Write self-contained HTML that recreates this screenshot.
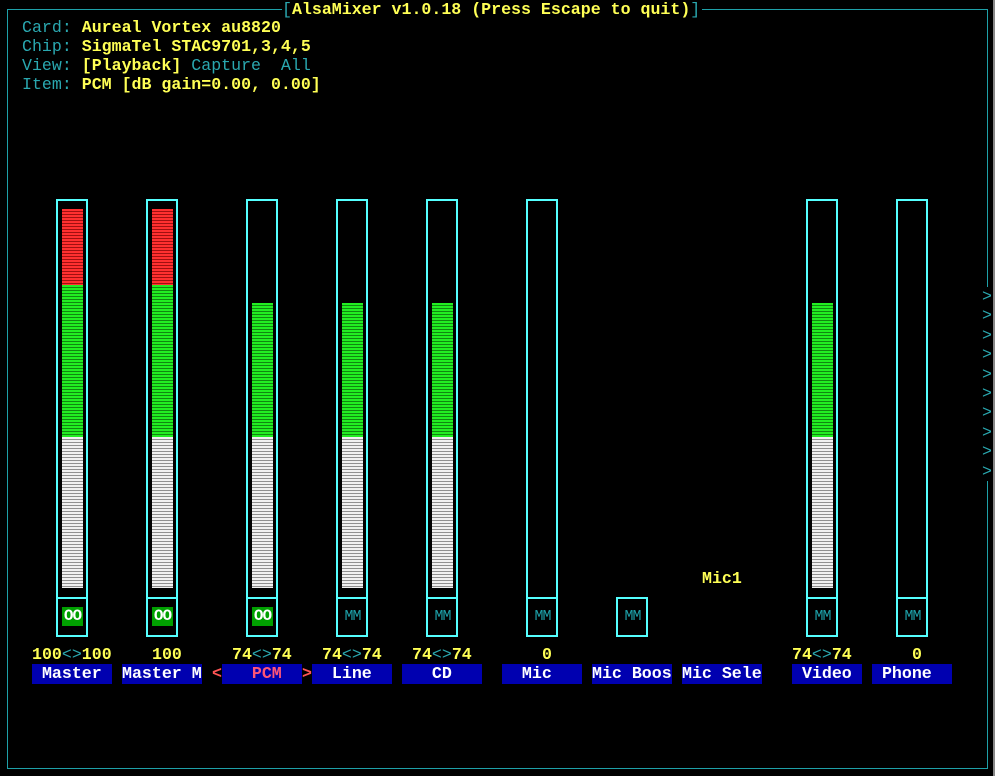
<!DOCTYPE html>
<html><head><style>
html,body{margin:0;padding:0;background:#000;width:995px;height:776px;overflow:hidden;position:relative;font-family:"Liberation Mono",monospace;font-size:16.6px;}
.t{position:absolute;line-height:19px;white-space:pre;}
.c{color:#2aa8b0;}
.y{color:#ffff55;font-weight:bold;}
.bd{position:absolute;background:#1ea0a8;}
.box{position:absolute;border:2px solid #55ffff;box-sizing:border-box;width:32px;}
.sep{position:absolute;height:2px;background:#55ffff;width:32px;}
.f{position:absolute;width:21px;}
.red{background:repeating-linear-gradient(#ff3030 0 2px,#a01010 2px 3px);}
.grn{background:repeating-linear-gradient(#22ee22 0 2px,#108810 2px 3px);}
.wht{background:repeating-linear-gradient(#f0f0f0 0 2px,#909090 2px 3px);}
.lab{position:absolute;top:664px;height:20px;width:80px;background:#0000b0;color:#fff;font-weight:bold;line-height:20px;white-space:pre;}
.mm{position:absolute;color:#1ea0a8;font-size:15px;top:607px;width:21px;text-align:center;line-height:19px;letter-spacing:-1px;}
.oo{position:absolute;background:#00a000;color:#fff;font-weight:bold;top:607px;width:21px;height:19px;text-align:center;line-height:19px;font-size:16px;letter-spacing:-1px;}
</style></head><body>
<div class="bd" style="left:7px;top:9px;width:275px;height:1px"></div>
<div class="bd" style="left:702px;top:9px;width:286px;height:1px"></div>
<div class="bd" style="left:7px;top:9px;width:1px;height:760px"></div>
<div class="bd" style="left:987px;top:9px;width:1px;height:760px"></div>
<div class="bd" style="left:7px;top:768px;width:981px;height:1px"></div>
<div style="position:absolute;left:993px;top:0;width:2px;height:776px;background:#888"></div>
<div class="t" style="left:282px;top:0"><span class="c">[</span><span class="y">AlsaMixer v1.0.18 (Press Escape to quit)</span><span class="c">]</span></div>
<div class="t" style="left:22px;top:18px"><span class="c">Card: </span><span class="y">Aureal Vortex au8820</span></div>
<div class="t" style="left:22px;top:37px"><span class="c">Chip: </span><span class="y">SigmaTel STAC9701,3,4,5</span></div>
<div class="t" style="left:22px;top:56px"><span class="c">View: </span><span class="y">[Playback]</span><span class="c"> Capture  All</span></div>
<div class="t" style="left:22px;top:75px"><span class="c">Item: </span><span class="y">PCM [dB gain=0.00, 0.00]</span></div>
<div class="t c" style="left:982px;top:287px;line-height:19.4px;background:#000">&gt;
&gt;
&gt;
&gt;
&gt;
&gt;
&gt;
&gt;
&gt;
&gt;</div>

<div class="box" style="left:56px;top:199px;height:438px"></div><div class="sep" style="left:56px;top:597px"></div>
<div class="f red" style="left:62px;top:209px;height:76px"></div><div class="f grn" style="left:62px;top:285px;height:152px"></div><div class="f wht" style="left:62px;top:437px;height:151px"></div>
<div class="oo" style="left:62px">OO</div>

<div class="box" style="left:146px;top:199px;height:438px"></div><div class="sep" style="left:146px;top:597px"></div>
<div class="f red" style="left:152px;top:209px;height:76px"></div><div class="f grn" style="left:152px;top:285px;height:152px"></div><div class="f wht" style="left:152px;top:437px;height:151px"></div>
<div class="oo" style="left:152px">OO</div>

<div class="box" style="left:246px;top:199px;height:438px"></div><div class="sep" style="left:246px;top:597px"></div>
<div class="f grn" style="left:252px;top:303px;height:134px"></div><div class="f wht" style="left:252px;top:437px;height:151px"></div>
<div class="oo" style="left:252px">OO</div>

<div class="box" style="left:336px;top:199px;height:438px"></div><div class="sep" style="left:336px;top:597px"></div>
<div class="f grn" style="left:342px;top:303px;height:134px"></div><div class="f wht" style="left:342px;top:437px;height:151px"></div>
<div class="mm" style="left:342px">MM</div>

<div class="box" style="left:426px;top:199px;height:438px"></div><div class="sep" style="left:426px;top:597px"></div>
<div class="f grn" style="left:432px;top:303px;height:134px"></div><div class="f wht" style="left:432px;top:437px;height:151px"></div>
<div class="mm" style="left:432px">MM</div>

<div class="box" style="left:526px;top:199px;height:438px"></div><div class="sep" style="left:526px;top:597px"></div>
<div class="mm" style="left:532px">MM</div>

<div class="box" style="left:616px;top:597px;height:40px"></div>
<div class="mm" style="left:622px">MM</div>

<div class="box" style="left:806px;top:199px;height:438px"></div><div class="sep" style="left:806px;top:597px"></div>
<div class="f grn" style="left:812px;top:303px;height:134px"></div><div class="f wht" style="left:812px;top:437px;height:151px"></div>
<div class="mm" style="left:812px">MM</div>

<div class="box" style="left:896px;top:199px;height:438px"></div><div class="sep" style="left:896px;top:597px"></div>
<div class="mm" style="left:902px">MM</div>

<div class="t y" style="left:702px;top:569px">Mic1</div>

<div class="t" style="left:32px;top:645px"><span class="y">100</span><span class="c">&lt;&gt;</span><span class="y">100</span></div>
<div class="t y" style="left:152px;top:645px">100</div>
<div class="t" style="left:232px;top:645px"><span class="y">74</span><span class="c">&lt;&gt;</span><span class="y">74</span></div>
<div class="t" style="left:322px;top:645px"><span class="y">74</span><span class="c">&lt;&gt;</span><span class="y">74</span></div>
<div class="t" style="left:412px;top:645px"><span class="y">74</span><span class="c">&lt;&gt;</span><span class="y">74</span></div>
<div class="t y" style="left:542px;top:645px">0</div>
<div class="t" style="left:792px;top:645px"><span class="y">74</span><span class="c">&lt;&gt;</span><span class="y">74</span></div>
<div class="t y" style="left:912px;top:645px">0</div>

<div class="lab" style="left:32px"> Master</div>
<div class="lab" style="left:122px">Master M</div>
<div class="t" style="left:212px;top:664px;color:#ff5555;font-weight:bold;line-height:20px">&lt;</div>
<div class="lab" style="left:222px;color:#ff5577">   PCM</div>
<div class="t" style="left:302px;top:664px;color:#ff5555;font-weight:bold;line-height:20px">&gt;</div>
<div class="lab" style="left:312px">  Line</div>
<div class="lab" style="left:402px">   CD</div>
<div class="lab" style="left:502px">  Mic</div>
<div class="lab" style="left:592px">Mic Boos</div>
<div class="lab" style="left:682px">Mic Sele</div>
<div class="lab" style="left:792px;width:70px"> Video</div>
<div class="lab" style="left:872px"> Phone</div>
</body></html>
